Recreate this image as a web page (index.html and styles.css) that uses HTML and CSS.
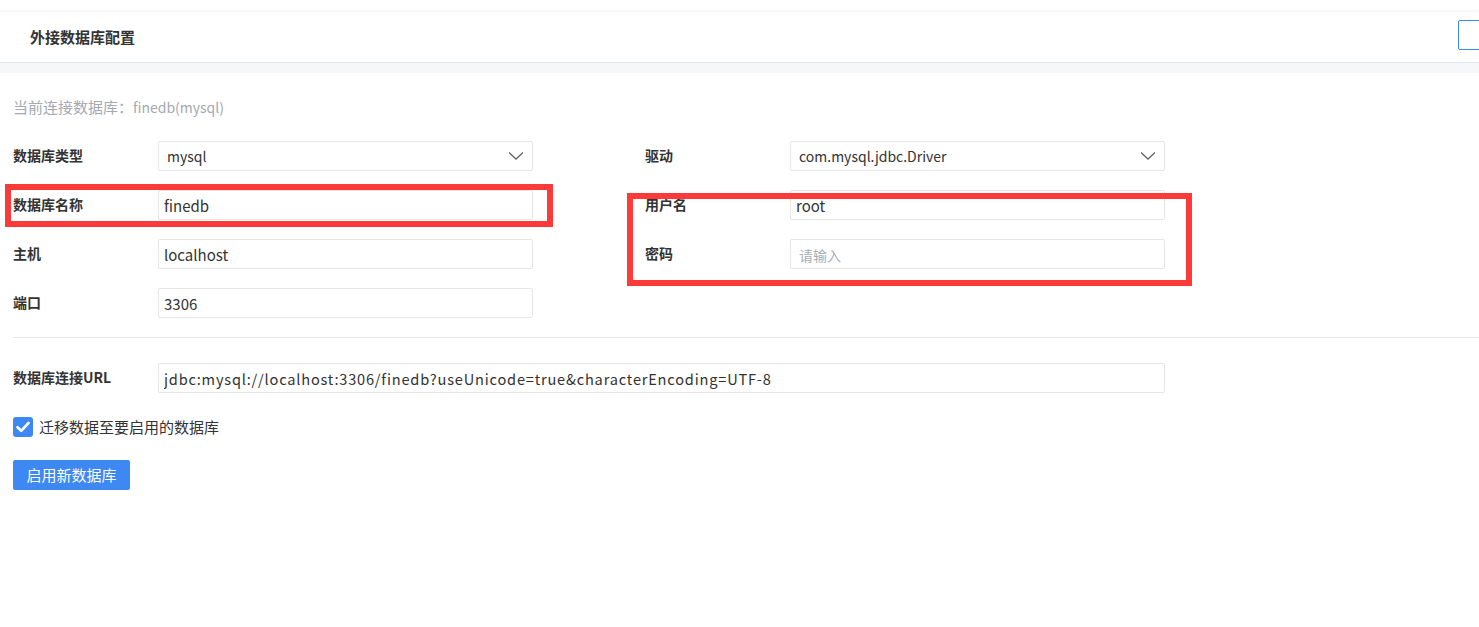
FILE: index.html
```html
<!DOCTYPE html>
<html lang="zh-CN">
<head>
    <meta charset="UTF-8">
    <title>外接数据库配置</title>
    <link rel="stylesheet" href="styles.css">
</head>
<body>
    <div class="topbar"></div>
    <div class="header">
        <h1>外接数据库配置</h1>
        <button class="header-btn"></button>
    </div>
    <div class="band"></div>

    <div class="content">
        <p class="current">当前连接数据库：<span class="current-db">finedb(mysql)</span></p>

        <div class="form-grid">
            <div class="form-group">
                <label>数据库类型</label>
                <div class="select">
                    <span>mysql</span>
                    <svg class="chevron" width="16" height="10" viewBox="0 0 16 10"><path d="M1 1.5 L8 8 L15 1.5" fill="none" stroke="#666" stroke-width="1.3"/></svg>
                </div>
            </div>
            <div class="form-group">
                <label>驱动</label>
                <div class="select">
                    <span>com.mysql.jdbc.Driver</span>
                    <svg class="chevron" width="16" height="10" viewBox="0 0 16 10"><path d="M1 1.5 L8 8 L15 1.5" fill="none" stroke="#666" stroke-width="1.3"/></svg>
                </div>
            </div>
            <div class="form-group">
                <label>数据库名称</label>
                <input type="text" value="finedb">
            </div>
            <div class="form-group">
                <label>用户名</label>
                <input type="text" value="root">
            </div>
            <div class="form-group">
                <label>主机</label>
                <input type="text" value="localhost">
            </div>
            <div class="form-group">
                <label>密码</label>
                <input type="password" placeholder="请输入">
            </div>
            <div class="form-group">
                <label>端口</label>
                <input type="text" value="3306">
            </div>
        </div>

        <hr class="divider">

        <div class="form-group url-group">
            <label>数据库连接URL</label>
            <input type="text" class="url-input" value="jdbc:mysql://localhost:3306/finedb?useUnicode=true&amp;characterEncoding=UTF-8">
        </div>

        <div class="check-row">
            <span class="checkbox">
                <svg width="14" height="12" viewBox="0 0 14 12"><path d="M1.5 6.2 L5.2 9.8 L12.5 2" fill="none" stroke="#fff" stroke-width="2.6" stroke-linecap="round" stroke-linejoin="round"/></svg>
            </span>
            <span class="check-label">迁移数据至要启用的数据库</span>
        </div>

        <button class="primary-btn">启用新数据库</button>
    </div>

    <!-- annotation boxes -->
    <div class="mark mark-name"></div>
    <div class="mark mark-account"></div>
</body>
</html>
```

FILE: styles.css
```css
* {
    margin: 0;
    padding: 0;
    box-sizing: border-box;
}

body {
    font-family: "Noto Sans CJK SC", "Noto Sans", sans-serif;
    background: #fff;
    color: #333;
    overflow: hidden;
    position: relative;
    width: 1479px;
    height: 627px;
}

.topbar {
    height: 10px;
    background: #fff;
}

.header {
    height: 53px;
    display: flex;
    align-items: center;
    justify-content: space-between;
    padding-left: 30px;
    border-bottom: 1px solid #e6e8ef;
    background: linear-gradient(to bottom, #f6f6f7 0, #fff 4px);
    overflow: hidden;
}

.header h1 {
    font-size: 15px;
    font-weight: bold;
    color: #333;
    line-height: 1;
}

.header-btn {
    width: 80px;
    height: 30px;
    margin-right: -59px;
    margin-top: -2px;
    border: 1px solid #3d88f2;
    border-radius: 2px;
    background: #fff;
}

.band {
    height: 10px;
    background: #f6f7f9;
}

.content {
    padding: 0 0 0 13px;
}

.current {
    font-size: 15px;
    color: #a4a9b3;
    line-height: 20px;
    margin-top: 24px;
}

.current-db {
    font-size: 14px;
}

.form-grid {
    margin-top: 24px;
    display: grid;
    grid-template-columns: 520px 520px;
    column-gap: 112px;
    row-gap: 19px;
}

.form-group {
    display: flex;
    align-items: center;
    height: 30px;
}

label {
    width: 145px;
    flex-shrink: 0;
    font-size: 14px;
    font-weight: bold;
    color: #333;
    line-height: 1;
    margin-top: -2px;
}

input, .select {
    width: 375px;
    height: 30px;
    border: 1px solid #e4e6ea;
    border-radius: 2px;
    font-family: "Noto Sans CJK SC", "Noto Sans", sans-serif;
    font-size: 15px;
    color: #333;
    padding: 0 5px;
    outline: none;
}

input::placeholder {
    color: #aaadb3;
    font-size: 14px;
}

input[type="password"] {
    padding-left: 8px;
}

.select {
    display: flex;
    align-items: center;
    justify-content: space-between;
    padding: 0 8px;
    font-size: 14px;
}

.divider {
    border: none;
    border-top: 1px solid #e6e8ec;
    margin-top: 19px;
}

.url-group {
    margin-top: 25px;
}

.url-input {
    width: 1007px;
    font-size: 14.6px;
    letter-spacing: 0.8px;
}

.check-row {
    display: flex;
    align-items: center;
    margin-top: 24px;
    height: 20px;
}

.checkbox {
    width: 20px;
    height: 20px;
    border-radius: 3px;
    background: #3d88f2;
    display: flex;
    align-items: center;
    justify-content: center;
}

.check-label {
    margin-left: 6px;
    font-size: 15px;
    color: #333;
    line-height: 1;
    margin-top: -2px;
}

.primary-btn {
    display: block;
    margin-top: 23px;
    width: 117px;
    height: 30px;
    background: #3d88f2;
    color: #fff;
    border: none;
    border-radius: 2px;
    font-family: "Noto Sans CJK SC", "Noto Sans", sans-serif;
    font-size: 15px;
    line-height: 1;
    padding-bottom: 2px;
}

.mark {
    position: absolute;
    border: 6px solid #fc3a3a;
}

.mark-name {
    left: 5px;
    top: 184px;
    width: 548px;
    height: 43px;
}

.mark-account {
    left: 627px;
    top: 193px;
    width: 565px;
    height: 93px;
}
```
